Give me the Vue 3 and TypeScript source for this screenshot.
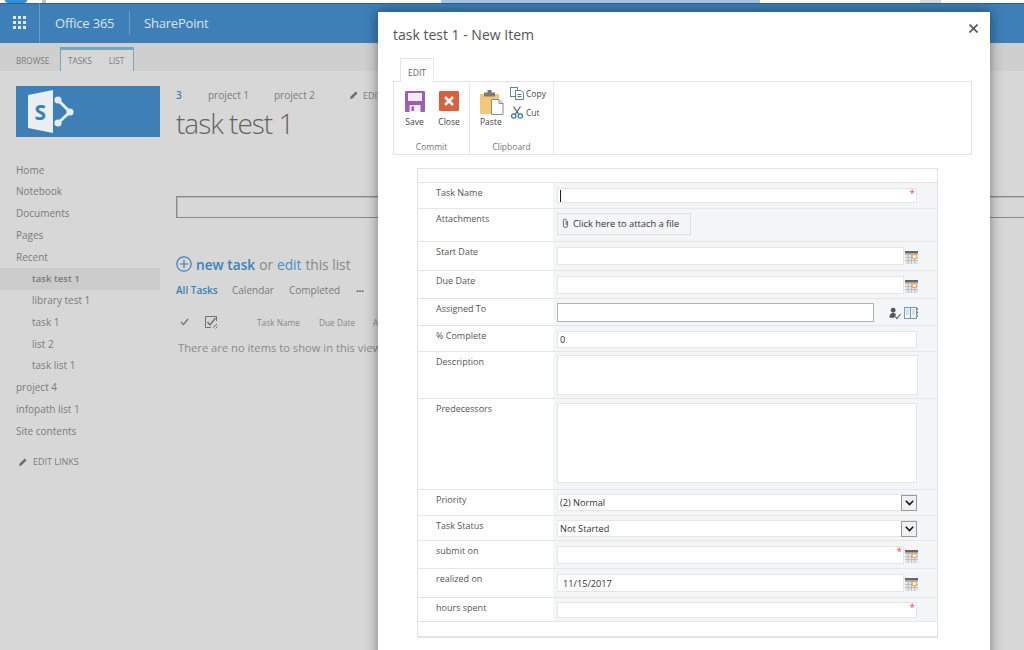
<script setup lang="ts">
type Row = {
  label: string
  h: number
  top: number
  kind: 'text' | 'attach' | 'date' | 'people' | 'area' | 'select'
  ih: number
  value?: string
  req?: boolean
  w?: number
}
const navTop = ['Home', 'Notebook', 'Documents', 'Pages', 'Recent']
const navSub = ['library test 1', 'task 1', 'list 2', 'task list 1']
const navEnd = ['project 4', 'infopath list 1', 'Site contents']
const rows: Row[] = [
  { label: 'Task Name', h: 26, top: 5, kind: 'text', ih: 15, req: true, value: '|' },
  { label: 'Attachments', h: 33, top: 4, kind: 'attach', ih: 22 },
  { label: 'Start Date', h: 29, top: 5, kind: 'date', ih: 18 },
  { label: 'Due Date', h: 28, top: 5, kind: 'date', ih: 18 },
  { label: 'Assigned To', h: 27, top: 4, kind: 'people', ih: 19 },
  { label: '% Complete', h: 26, top: 5, kind: 'text', ih: 17, value: '0' },
  { label: 'Description', h: 47, top: 3, kind: 'area', ih: 40, w: 361 },
  { label: 'Predecessors', h: 91, top: 4, kind: 'area', ih: 80, w: 360 },
  { label: 'Priority', h: 26, top: 4, kind: 'select', ih: 17, value: '(2) Normal' },
  { label: 'Task Status', h: 25, top: 4, kind: 'select', ih: 17, value: 'Not Started' },
  { label: 'submit on', h: 28, top: 5, kind: 'date', ih: 18, req: true },
  { label: 'realized on', h: 29, top: 5, kind: 'date', ih: 18, value: '11/15/2017' },
  { label: 'hours spent', h: 24, top: 4, kind: 'text', ih: 16, req: true }
]
</script>

<template>
  <div class="page">
    <div class="strip">
      <span class="blob"></span>
      <span class="tiny"></span>
      <span class="paleblue"></span>
      <span class="graytab"></span>
    </div>
    <header class="suite">
      <div class="waffle">
        <svg width="14" height="14" viewBox="0 0 14 14" fill="#dfe9f2">
          <rect x="0" y="0" width="3" height="3" /><rect x="5" y="0" width="3" height="3" /><rect x="10" y="0" width="3" height="3" />
          <rect x="0" y="5" width="3" height="3" /><rect x="5" y="5" width="3" height="3" /><rect x="10" y="5" width="3" height="3" />
          <rect x="0" y="10" width="3" height="3" /><rect x="5" y="10" width="3" height="3" /><rect x="10" y="10" width="3" height="3" />
        </svg>
      </div>
      <span class="brand">Office 365</span>
      <span class="suite-sep"></span>
      <span class="app-name">SharePoint</span>
    </header>
    <div class="tabs">
      <span class="tab-browse">BROWSE</span>
      <div class="tab-group"><span>TASKS</span><span>LIST</span></div>
    </div>
    <div class="body">
      <aside class="side">
        <div class="logo">
          <svg width="48" height="43" viewBox="0 0 48 43">
            <path d="M30 10 L42 22 L30 33" stroke="#e4ebf2" stroke-width="3" fill="none" />
            <circle cx="42" cy="22" r="3.6" fill="#e4ebf2" />
            <circle cx="30" cy="10" r="3.6" fill="#e4ebf2" />
            <circle cx="30" cy="33" r="3.6" fill="#e4ebf2" />
            <path d="M0 5 L25 0 V43 L0 38 Z" fill="#e9eef3" />
            <text x="6.5" y="30" fill="#3d7fb6" class="logo-s">S</text>
          </svg>
        </div>
        <nav class="nav">
          <a v-for="n in navTop" :key="n" class="nav-item">{{ n }}</a>
          <a class="nav-item sub current">task test 1</a>
          <a v-for="n in navSub" :key="n" class="nav-item sub">{{ n }}</a>
          <a v-for="n in navEnd" :key="n" class="nav-item">{{ n }}</a>
          <a class="edit-links">
            <svg width="10" height="10" viewBox="0 0 10 10"><path d="M1 9 L1.6 6.6 L6.8 1.4 L8.6 3.2 L3.4 8.4 Z" fill="#6e6e6e" /></svg>
            EDIT LINKS
          </a>
        </nav>
      </aside>
      <main class="main">
        <div class="crumbs">
          <b>3</b><span class="c1">project 1</span><span class="c2">project 2</span>
          <svg width="10" height="10" viewBox="0 0 10 10"><path d="M1 9 L1.6 6.6 L6.8 1.4 L8.6 3.2 L3.4 8.4 Z" fill="#6e6e6e" /></svg>
          <span class="c3">EDIT LINKS</span>
        </div>
        <h1 class="title">task test 1</h1>
        <div class="searchbox"></div>
        <div class="newline">
          <svg width="16" height="16" viewBox="0 0 16 16" fill="none" stroke="#3d7fb6" stroke-width="1.2">
            <circle cx="8" cy="8" r="7.2" /><path d="M8 3.8 V12.2 M3.8 8 H12.2" />
          </svg>
          <span class="nt">new task</span> <span class="gr">or</span> <span class="ed">edit</span> <span class="gr">this list</span>
        </div>
        <div class="views">
          <b>All Tasks</b><span>Calendar</span><span>Completed</span><i>•••</i>
        </div>
        <div class="thead">
          <svg width="9" height="8" viewBox="0 0 9 8" fill="none" stroke="#707070" stroke-width="1.3"><path d="M1 4 L3.4 6.6 L8 1" /></svg>
          <svg class="tcheck" width="13" height="13" viewBox="0 0 13 13" fill="none" stroke="#707070" stroke-width="1"><path d="M11.5 5 V0.5 H0.5 V11.5 H6" /><path d="M2.5 6 L5 9 L10.5 2" stroke-width="1.4" /><path d="M8 11.5 L12 8 M10.5 12.5 L12.5 10.5" /></svg>
          <span class="th1">Task Name</span><span class="th2">Due Date</span><span class="th3">Assigned To</span>
        </div>
        <p class="empty">There are no items to show in this view</p>
      </main>
    </div>

    <section class="modal" aria-label="task test 1 - New Item">
      <div class="m-head">
        <h2 class="m-title">task test 1 - New Item</h2>
        <svg class="m-close" width="9" height="9" viewBox="0 0 9 9" stroke="#555" stroke-width="1.6"><path d="M0.5 0.5 L8.5 8.5 M8.5 0.5 L0.5 8.5" /></svg>
      </div>
      <div class="m-tabbar"><span class="m-tab">EDIT</span></div>
      <div class="m-ribbon">
        <div class="rgroup g1">
          <div class="rbtns">
            <div class="big">
              <div class="ibox">
                <svg class="i1" width="20" height="21" viewBox="0 0 20 21">
                  <rect width="20" height="21" rx="1" fill="#9b5fb5" />
                  <rect x="3" y="2" width="14" height="8" fill="#f4ecf7" />
                  <rect x="4.5" y="14" width="11" height="7" fill="#f4ecf7" />
                  <rect x="6.5" y="15.5" width="2.5" height="4.5" fill="#9b5fb5" />
                </svg>
              </div>
              <span>Save</span>
            </div>
            <div class="big b2">
              <div class="ibox">
                <svg class="i2" width="20" height="20" viewBox="0 0 20 20">
                  <rect width="20" height="20" rx="1" fill="#dd5f3e" />
                  <path d="M6 6 L14 14 M14 6 L6 14" stroke="#fff" stroke-width="2.6" />
                </svg>
              </div>
              <span>Close</span>
            </div>
          </div>
          <div class="gname">Commit</div>
        </div>
        <div class="rgroup g2">
          <div class="rbtns">
            <div class="big b3">
              <div class="ibox">
                <svg width="24" height="25" viewBox="0 0 24 25">
                  <rect x="0" y="4" width="19" height="20" fill="#f2c877" />
                  <rect x="4" y="2.5" width="11" height="4" fill="#7a7a7a" />
                  <rect x="7.5" y="0" width="4" height="3" fill="#7a7a7a" />
                  <path d="M11.5 9.5 H19 L23 13.5 V24.5 H11.5 Z" fill="#fff" stroke="#8a8a8a" />
                  <path d="M19 9.5 V13.5 H23" fill="none" stroke="#8a8a8a" />
                </svg>
              </div>
              <span>Paste</span>
            </div>
            <div class="smalls">
              <div class="small">
                <svg width="14" height="13" viewBox="0 0 14 13" fill="#fff" stroke="#6f7f92">
                  <rect x="0.5" y="0.5" width="7" height="9" />
                  <path d="M5.5 3.5 H11 L13.5 6 V12.5 H5.5 Z" />
                  <path d="M7.5 7.5 H11.5 M7.5 9.5 H11.5" stroke="#3d7fb6" />
                </svg>
                <span>Copy</span>
              </div>
              <div class="small">
                <svg width="14" height="13" viewBox="0 0 13 13" fill="none">
                  <path d="M3 0.5 L8 8 M10 0.5 L5 8" stroke="#555" stroke-width="1.2" />
                  <circle cx="3.2" cy="10" r="2.2" stroke="#2f6fb0" stroke-width="1.2" />
                  <circle cx="9.8" cy="10" r="2.2" stroke="#2f6fb0" stroke-width="1.2" />
                </svg>
                <span>Cut</span>
              </div>
            </div>
          </div>
          <div class="gname">Clipboard</div>
        </div>
      </div>

      <div class="formwrap">
        <div class="ftop"></div>
        <div v-for="r in rows" :key="r.label" class="frow" :style="{ height: r.h + 'px' }">
          <div class="flabel">{{ r.label }}</div>
          <div class="ffield" :style="{ paddingTop: r.top + 'px' }">
            <div v-if="r.kind === 'text'" class="inp full" :style="{ height: r.ih + 'px' }">
              <span v-if="r.value === '|'" class="caret"></span>
              <span v-else>{{ r.value }}</span>
              <em v-if="r.req" class="star">*</em>
            </div>
            <div v-else-if="r.kind === 'attach'" class="attach">
              <svg width="7" height="10" viewBox="0 0 7 10" fill="none" stroke="#5f6b78" stroke-width="1"><path d="M5.6 3 V7.4 A2.1 2.1 0 0 1 1.4 7.4 V2.4 A1.4 1.4 0 0 1 4.2 2.4 V7" /></svg>
              <span>Click here to attach a file</span>
            </div>
            <div v-else-if="r.kind === 'date'" class="daterow">
              <div class="inp date" :style="{ height: r.ih + 'px' }">
                <span class="dval">{{ r.value }}</span>
                <em v-if="r.req" class="star">*</em>
              </div>
              <svg class="cal" width="13" height="13" viewBox="0 0 13 13">
                <rect width="13" height="13" fill="#e6e6e6" />
                <rect width="13" height="2.5" fill="#666" />
                <path d="M0 3.5 H13 M0 6.5 H13 M0 9.5 H13 M3.2 3 V13 M6.5 3 V13 M9.8 3 V13" stroke="#a4a4a4" stroke-width="0.6" />
                <rect x="7.2" y="3.8" width="4" height="3.6" fill="#fff" stroke="#ef9a3a" stroke-width="0.9" />
              </svg>
            </div>
            <div v-else-if="r.kind === 'people'" class="peoplerow">
              <div class="inp people" :style="{ height: r.ih + 'px' }"></div>
              <svg class="pcheck" width="12" height="13" viewBox="0 0 13 13">
                <circle cx="4.5" cy="3" r="2.6" fill="#555" />
                <path d="M0.5 11 C0.5 7 2.5 6 4.5 6 C6 6 7 6.6 7.5 7.5 L5.5 11 Z" fill="#555" />
                <path d="M6.5 9.5 L8.5 12 L12.5 7" fill="none" stroke="#555" stroke-width="1.1" />
              </svg>
              <svg class="pbook" width="14" height="12" viewBox="0 0 14 12" fill="#f2f6fa" stroke="#6f9ac4">
                <rect x="0.5" y="0.5" width="6" height="11" /><rect x="6.5" y="0.5" width="6" height="11" />
                <path d="M2 3 H5 M2 5 H5 M2 7 H5 M8 3 H11 M8 5 H11 M8 7 H11" stroke="#a9b4c0" stroke-width="0.7" />
                <path d="M13.5 1 V3" stroke="#d9534f" /><path d="M13.5 4.5 V6.5" stroke="#3d7fb6" /><path d="M13.5 8 V10" stroke="#5cb85c" />
              </svg>
            </div>
            <div v-else-if="r.kind === 'area'" class="inp" :style="{ height: r.ih + 'px', width: r.w + 'px' }"></div>
            <div v-else class="inp full sel" :style="{ height: r.ih + 'px' }">
              <span>{{ r.value }}</span>
              <span class="selbtn">
                <svg width="9" height="6" viewBox="0 0 9 6" fill="none" stroke="#111" stroke-width="1.5"><path d="M0.8 0.8 L4.5 4.6 L8.2 0.8" /></svg>
              </span>
            </div>
          </div>
        </div>
        <div class="fbottom"></div>
      </div>
    </section>
  </div>
</template>

<style>
html, body { margin: 0; padding: 0; background: #d7d7d7; }
</style>

<style scoped>
.page {
  position: relative;
  width: 1024px;
  height: 650px;
  overflow: hidden;
  background: #d7d7d7;
  font-family: "Open Sans", "Noto Sans", sans-serif;
  color: #7b7b7b;
}
.strip { height: 3px; background: #fff; display: flex; }
.strip span { height: 3px; display: block; }
.blob { width: 22px; margin-left: 5px; background: #2f8fd6; border-radius: 0 0 4px 4px; }
.tiny { width: 4px; margin-left: 15px; background: #c4c4c4; }
.paleblue { width: 319px; margin-left: 395px; background: #a9c8e6; }
.graytab { width: 21px; margin-left: 160px; background: #dcdcdc; }
.suite {
  height: 40px;
  background: #3d7fb6;
  display: flex;
  align-items: center;
  color: #dbe6f0;
  box-shadow: inset 0 1px 0 #2b628f;
}
.waffle { width: 40px; height: 40px; box-sizing: border-box; border-right: 1px solid #6a9cc6; display: flex; align-items: center; justify-content: center; }
.waffle svg { margin-left: 1px; }
.brand { margin-left: 15px; font-size: 13px; width: 74px; white-space: nowrap; letter-spacing: -0.2px; }
.suite-sep { width: 1px; height: 24px; background: #6a9cc6; }
.app-name { margin-left: 14px; font-size: 13px; letter-spacing: -0.2px; }
.tabs { height: 28px; background: #cfcfcf; display: flex; align-items: flex-end; font-size: 8.2px; color: #7b7b7b; }
.tab-browse { margin-left: 16px; width: 44px; height: 16px; }
.tab-group { width: 74px; height: 24px; box-sizing: border-box; border: 1px solid #72a7c0; border-top: 3px solid #72a7c0; border-bottom: 0; background: #d7d7d7; display: flex; gap: 17px; padding: 5px 0 0 7px; }
.body { display: flex; }
.side { width: 160px; flex: none; padding-top: 15px; }
.logo { height: 51px; background: #3d7fb6; margin-left: 16px; display: flex; align-items: center; padding-left: 12px; box-sizing: border-box; }
.logo-s { font-family: "Open Sans", sans-serif; font-weight: 700; font-size: 21px; }
.nav { margin-top: 22.5px; display: flex; flex-direction: column; font-size: 10px; }
.nav-item { height: 21.75px; line-height: 21.75px; padding-left: 16px; white-space: nowrap; }
.sub { padding-left: 32px; }
.current { background: #cbcbcb; font-weight: 600; font-size: 9.6px; }
.edit-links { margin-top: 9px; padding-left: 18px; font-size: 9px; display: flex; align-items: center; gap: 5px; height: 21px; }
.main { flex: 1; padding: 15px 0 0 16px; min-width: 0; }
.crumbs { display: flex; align-items: center; font-size: 10px; height: 18px; white-space: nowrap; }
.crumbs b { color: #3d7fb6; width: 32px; font-weight: 600; }
.c1 { width: 66px; }
.c2 { width: 75px; }
.c3 { margin-left: 4px; font-size: 9px; }
.title { margin: -1px 0 0; font-size: 28px; line-height: 40px; font-weight: 300; color: #636363; height: 40px; letter-spacing: -1px; }
.searchbox { margin-top: 53px; height: 20px; border: 1px solid #8a8a8a; border-right: 0; box-shadow: inset 1px 1px 0 #b8b8b8; }
.newline { margin-top: 36px; display: flex; align-items: center; gap: 4px; font-size: 13.7px; white-space: nowrap; height: 20px; }
.nt { color: #3d7fb6; font-weight: 600; }
.ed { color: #4b8ec4; }
.gr { color: #868686; }
.views { margin-top: 7px; display: flex; align-items: center; font-size: 10px; height: 18px; white-space: nowrap; }
.views b { color: #3d7fb6; font-weight: 600; width: 56px; }
.views span { width: 57px; }
.views span + span { width: 67px; }
.views i { font-style: normal; font-size: 8px; color: #666; letter-spacing: -0.5px; }
.thead { margin-top: 15px; padding-left: 4px; display: flex; align-items: center; font-size: 8.3px; height: 16px; white-space: nowrap; color: #868686; }
.tcheck { margin-left: 16px; }
.th1 { margin-left: 39px; width: 62px; }
.th2 { width: 54px; }
.empty { margin: 10px 0 0 2px; font-size: 11.2px; line-height: 16px; color: #8a8a8a; white-space: nowrap; }

.modal {
  position: absolute;
  left: 378px;
  top: 12px;
  width: 612px;
  height: 660px;
  background: #fff;
  box-shadow: 0 0 12px rgba(0, 0, 0, 0.45);
  color: #444;
}
.m-head { height: 46px; padding: 0 15px; display: flex; justify-content: space-between; align-items: center; }
.m-title { margin: 0; font-size: 14px; font-weight: 400; color: #555; line-height: 44px; white-space: nowrap; }
.m-close { margin-top: -14px; margin-right: -3px; }
.m-tabbar { height: 23px; padding-left: 22px; display: flex; }
.m-tab { width: 34px; height: 24px; box-sizing: border-box; border: 1px solid #e6e6e6; border-bottom: 0; background: #fff; font-size: 8.5px; color: #666; text-align: center; line-height: 28px; position: relative; z-index: 1; }
.m-ribbon { margin-left: 15px; width: 579px; height: 74px; box-sizing: border-box; border: 1px solid #e4e4e4; display: flex; }
.rgroup { height: 72px; box-sizing: border-box; border-right: 1px solid #e8e8e8; display: flex; flex-direction: column; }
.g1 { width: 76px; }
.g2 { width: 84px; }
.rbtns { flex: 1; display: flex; padding: 8px 0 0 10px; }
.big { display: flex; flex-direction: column; align-items: center; font-size: 8.5px; color: #444; width: 21px; }
.ibox { height: 25px; }
.i1, .i2 { display: block; margin-top: 1px; }
.big span { line-height: 14px; }
.b2 { margin-left: 14px; width: 20px; }
.b3 { width: 24px; align-items: flex-start; }
.smalls { margin-left: 6px; margin-top: -3px; display: flex; flex-direction: column; gap: 6px; }
.small { display: flex; align-items: center; gap: 2px; font-size: 8.5px; height: 13px; color: #444; }
.gname { text-align: center; font-size: 8.5px; color: #777; height: 14px; line-height: 14px; }

.formwrap { margin: 13px 0 0 39px; width: 521px; box-sizing: border-box; border: 1px solid #e3e3e3; border-bottom-width: 2px; }
.ftop { height: 13px; border-bottom: 1px solid #e6e6e6; }
.frow { display: flex; box-sizing: border-box; border-bottom: 1px solid #e6e6e6; }
.flabel { width: 135px; flex: none; box-sizing: border-box; padding: 3px 0 0 18px; font-size: 9px; line-height: 13px; color: #555; }
.ffield { flex: 1; background: #f4f5f6; padding-left: 4px; box-sizing: border-box; }
.fbottom { height: 14px; }
.inp { position: relative; background: #fff; box-sizing: border-box; border: 1px solid #e6e6e6; font-size: 9.2px; color: #333; display: flex; align-items: center; padding-left: 2px; }
.full { width: 360px; }
.caret { width: 1px; height: 12px; background: #222; }
.star { position: absolute; right: 1px; top: -3px; color: #f2545b; font-style: normal; font-size: 10px; line-height: 14px; }
.attach { width: 134px; height: 22px; box-sizing: border-box; border: 1px solid #dfe1e4; display: flex; align-items: center; gap: 4px; padding: 0 0 2px 4px; font-size: 9.3px; color: #333; white-space: nowrap; }
.daterow, .peoplerow { display: flex; align-items: flex-start; }
.date { width: 347px; }
.dval { padding-left: 3px; }
.cal { margin: 4px 0 0 1px; }
.people { width: 317px; border-color: #b2b2b2; }
.pcheck { margin: 4px 0 0 15px; }
.pbook { margin: 4px 0 0 3px; }
.sel { justify-content: space-between; }
.selbtn { width: 16px; height: 16px; margin: -1px -1px -1px 0; box-sizing: border-box; border: 1px solid #9a9a9a; background: #f1f1f1; display: flex; align-items: center; justify-content: center; }
</style>
